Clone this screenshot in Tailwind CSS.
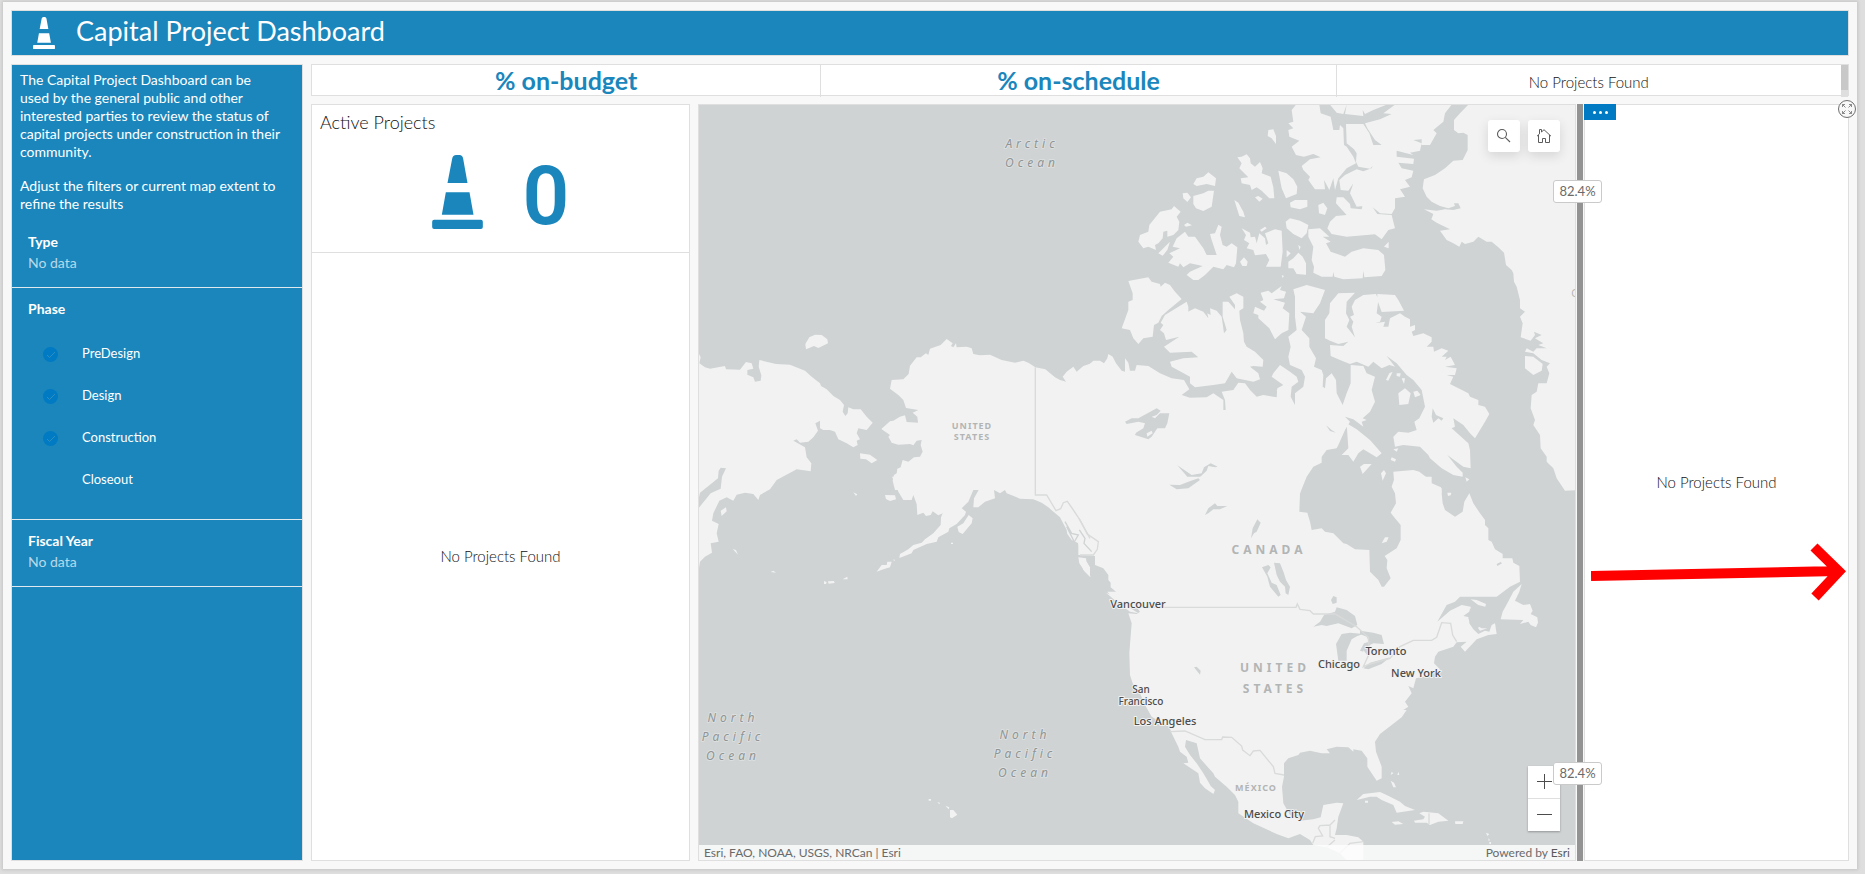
<!DOCTYPE html>
<html lang="en">
<head>
<meta charset="utf-8">
<title>Capital Project Dashboard</title>
<script src="https://cdn.jsdelivr.net/npm/@tailwindcss/browser@4"></script>
</head>
<body class="bg-[#dedede] font-['Lato',sans-serif] text-[#111]">
<svg class="hidden" aria-hidden="true">
  <symbol id="cone" viewBox="0 0 152 222"><path d="M60 11Q62 0 72 0H82Q91 0 93 11L106 84H46ZM41 112H112L124 179H29ZM6 194H146Q152 194 152 200V216Q152 222 146 222H6Q0 222 0 216V200Q0 194 6 194Z" fill="currentColor"/></symbol>
</svg>
<div class="flex h-screen pt-[2px] pr-2 pb-[5px] pl-[3px]">
<div class="flex min-w-0 flex-1 flex-col gap-2 bg-[#f8f8f8] p-2 shadow-[0_0_3px_1px_#c4c4c4]">
  <header class="flex h-[46px] shrink-0 items-center gap-[21px] border border-[#dfdfdf] bg-[#1a86bc] pl-[21px] text-white">
    <svg class="h-8 w-[22px]" aria-hidden="true"><use href="#cone"/></svg>
    <h1 class="pb-[5px] text-[27px] leading-8">Capital Project Dashboard</h1>
  </header>

  <div class="flex min-h-0 flex-1 gap-2">
    <aside class="w-[292px] shrink-0 border border-[#dfdfdf] bg-[#1a86bc] text-white">
      <div class="flex h-[156px] flex-col gap-4 px-2 pt-[6px] text-[14px] leading-[18px]">
        <p>The Capital Project Dashboard can be<br>used by the general public and other<br>interested parties to review the status of<br>capital projects under construction in their<br>community.</p>
        <p>Adjust the filters or current map extent to<br>refine the results</p>
      </div>
      <section class="h-[67px] border-b border-[#dfe9ee] px-4 pt-[11px]">
        <h2 class="text-[14px] leading-5 font-bold">Type</h2>
        <p class="text-[14px] leading-[22px] text-white/70">No data</p>
      </section>
      <fieldset class="border-b border-[#dfe9ee] px-4 pt-[11px] pb-[18px]">
        <legend class="float-left w-full text-[14px] leading-5 font-bold">Phase</legend>
        <div class="clear-both pt-[14px] pl-[15px] text-[13px]">
          <label class="flex h-[42px] items-center gap-6"><span class="relative flex"><input type="checkbox" checked class="peer size-[15px] appearance-none rounded-full checked:bg-[#007ac2]"><svg class="pointer-events-none absolute inset-0 hidden peer-checked:block" viewBox="0 0 15 15" fill="none" stroke="#2b8fc4"><path d="M4 8l2.500 2.500L12 5"/></svg></span>PreDesign</label>
          <label class="flex h-[42px] items-center gap-6"><span class="relative flex"><input type="checkbox" checked class="peer size-[15px] appearance-none rounded-full checked:bg-[#007ac2]"><svg class="pointer-events-none absolute inset-0 hidden peer-checked:block" viewBox="0 0 15 15" fill="none" stroke="#2b8fc4"><path d="M4 8l2.500 2.500L12 5"/></svg></span>Design</label>
          <label class="flex h-[42px] items-center gap-6"><span class="relative flex"><input type="checkbox" checked class="peer size-[15px] appearance-none rounded-full checked:bg-[#007ac2]"><svg class="pointer-events-none absolute inset-0 hidden peer-checked:block" viewBox="0 0 15 15" fill="none" stroke="#2b8fc4"><path d="M4 8l2.500 2.500L12 5"/></svg></span>Construction</label>
          <label class="flex h-[42px] items-center gap-6"><span class="relative flex"><input type="checkbox" class="peer size-[15px] appearance-none rounded-full checked:bg-[#007ac2]"><svg class="pointer-events-none absolute inset-0 hidden peer-checked:block" viewBox="0 0 15 15" fill="none" stroke="#2b8fc4"><path d="M4 8l2.500 2.500L12 5"/></svg></span>Closeout</label>
        </div>
      </fieldset>
      <section class="h-[67px] border-b border-[#dfe9ee] px-4 pt-[11px]">
        <h2 class="text-[14px] leading-5 font-bold">Fiscal Year</h2>
        <p class="text-[14px] leading-[22px] text-white/70">No data</p>
      </section>
    </aside>

    <main class="flex min-w-0 flex-1 flex-col gap-2">
      <div class="grid h-8 shrink-0 grid-cols-[510fr_516fr_512fr] border border-[#dfdfdf] bg-white text-center">
        <div class="border-r border-[#dfdfdf] text-[25px] leading-[30px] font-bold text-[#1a86bc]">% on-budget</div>
        <div class="border-r border-[#dfdfdf] text-[25px] leading-[30px] font-bold text-[#1a86bc]">% on-schedule</div>
        <div class="flex"><p class="flex-1 pt-[2px] text-[15px] leading-[30px] font-light">No Projects Found</p><div class="w-[7px] bg-[#dedede]"><div class="h-[25px] bg-[#c8c8c8]"></div></div></div>
      </div>

      <div class="grid min-h-0 flex-1 grid-cols-[379fr_878fr_265fr] gap-2">
        <section class="flex min-w-0 flex-col border border-[#dfdfdf] bg-white">
          <div class="flex h-[148px] shrink-0 flex-col border-b border-[#dfdfdf]">
            <h2 class="px-2 pt-[7px] text-[18px] leading-5 font-light">Active Projects</h2>
            <div class="flex flex-1 items-center justify-center gap-10 text-[#1a86bc]">
              <svg class="h-[74px] w-[51px]" aria-hidden="true"><use href="#cone"/></svg>
              <span class="pt-2 font-['Roboto',sans-serif] text-[82px] leading-[82px] font-semibold">0</span>
            </div>
          </div>
          <p class="flex flex-1 items-center justify-center text-[15px] font-light">No Projects Found</p>
        </section>

        <section class="relative min-w-0 border border-[#dfdfdf] bg-[#cfd3d4]">
          <div class="absolute inset-0 overflow-hidden">
          <svg class="size-full" viewBox="699 105 876 755" preserveAspectRatio="xMidYMid slice" role="img" aria-label="Map of North America">
            <g fill="#f2f2f2" stroke="none">
              <!-- Siberia, Alaska north -->
              <g transform="translate(690 100) scale(.33333)">
                <path d="M20 760L26 760 32 772 28 790 45 802 60 806 105 798 108 808 150 809 168 786 185 790 190 806 172 810 172 824 190 832 195 845 212 842 214 826 206 800 208 780 258 792 300 794 345 812 365 830 390 850 393 858 410 868 430 888 450 900 462 915 458 935 466 948 473 940 475 922 490 928 512 928 530 950 548 968 530 990 505 985 500 1000 510 1018 500 1022 503 1035 490 1042 470 1030 445 1018 435 995 420 990 400 990 390 985 390 962 376 970 384 992 370 1012 355 1025 330 1028 320 1018 310 1022 345 1042 350 1072 364 1090 362 1114 320 1108 260 1140 240 1168 210 1185 205 1200 190 1182 165 1178 140 1184 130 1202 110 1192 88 1202 70 1240 66 1262 86 1272 80 1300 86 1325 62 1330 66 1358 45 1370 30 1385 26 1410 20 1410Z"/>
                <path d="M108 1105L92 1103 86 1112 84 1135 30 1178 20 1225 28 1222 62 1180 92 1166 96 1130Z" fill="#cfd3d4"/>
                <path d="M348 748L346 732 358 712 375 704 395 705 412 718 414 730 385 744 372 738Z"/>
                <path d="M510 1060L540 1064 562 1080 545 1090 528 1078 511 1076ZM490 1177L502 1183 498 1188ZM92 1232L108 1222 110 1234 95 1248ZM128 1347L138 1350 144 1364Z"/>
                <path d="M1205 790L1180 798 1160 815 1150 800 1130 815 1118 830 1128 845 1110 840 1095 832 1066 808 1036 802 1015 788 1000 782 975 788 935 780 900 764 870 766 850 762 845 745 830 740 800 742 798 730 790 742 783 738 788 730 770 717 752 735 720 746 715 765 708 760 692 772 680 772 660 797 656 822 640 838 605 840 600 866 625 885 640 900 648 924 685 930 668 938 682 950 684 968 650 966 645 946 630 950 610 962 600 964 574 987 600 1005 595 1010 605 1028 625 1034 660 1032 670 1036 680 1022 695 1020 692 1035 698 1055 690 1070 672 1072 655 1085 638 1080 632 1102 622 1106 620 1120 612 1125 608 1142 615 1170 1205 1170Z"/>
              </g>
              <!-- Alaska south and panhandle -->
              <g transform="translate(690 480) scale(.33333)">
                <path d="M606 -10L620 20 625 35 640 60 665 60 670 45 680 72 682 105 700 98 708 108 722 105 728 94 745 106 758 100 753 112 752 135 730 160 705 178 695 188 670 195 655 208 630 222 628 234 665 220 670 210 710 192 740 185 745 172 775 155 778 145 800 132 825 105 828 95 815 85 835 65 850 30 870 15 885 18 882 25 866 30 852 55 850 82 865 82 885 65 915 55 912 30 930 40 945 30 950 40 990 56 1030 58 1055 68 1075 82 1110 112 1130 150 1132 162 1145 180 1165 190 1172 222 1205 225 1205 -10Z"/>
                <path d="M585 45L615 46 618 58 600 63 588 57ZM802 140L820 130 836 105 848 115 845 130 818 162 806 156ZM560 275L575 255 590 255 592 245 605 245 600 262 580 268ZM610 238L615 240 612 244ZM458 298L472 290 473 298ZM402 303L410 306 408 312 402 312ZM414 304L432 303 434 309 416 311ZM242 276L250 272 258 278ZM783 188H789V192H783ZM1170 240L1190 245 1200 262 1200 290 1180 270ZM780 990L790 990 802 1004 786 1015 780 1012ZM766 977L778 982 776 988ZM742 967L750 968 748 973ZM716 957H723V962H716Z"/>
              </g>
              <!-- Arctic Canada -->
              <g transform="translate(1080 100) scale(.33333)">
                <path d="M-5 815L20 800 40 782 60 782 72 790 82 775 85 762 98 770 108 790 125 812 135 815 135 775 145 788 150 812 165 812 170 795 205 798 240 820 275 835 312 840 328 868 305 885 330 893 380 892 400 880 430 900 430 930 437 930 435 900 425 875 460 870 475 848 495 850 510 870 530 890 550 885 590 892 592 865 610 855 575 830 580 820 600 795 630 815 650 830 655 845 635 860 632 890 645 915 645 880 670 860 675 830 665 810 630 795 625 770 632 740 625 710 650 690 645 650 645 590 640 568 680 555 735 570 720 610 700 640 660 635 678 650 665 690 688 715 688 740 708 775 702 800 725 810 730 825 728 860 735 865 738 835 755 820 768 840 770 880 788 915 800 880 812 850 812 795 850 798 860 820 885 830 875 870 885 905 870 935 848 955 860 960 845 965 850 980 820 958 795 950 810 965 795 990 775 1035 770 1045 740 1050 725 1070 725 1088 700 1100 680 1130 660 1180 -5 1180ZM945 1180L940 1115 1000 1110 1018 1115 1050 1140 1052 1155 1085 1165 1085 1180Z"/>
                <path d="M648 14L635 30 640 65 625 70 640 85 625 90 628 110 658 122 635 140 648 165 672 170 700 162 722 172 690 178 665 198 670 210 690 230 685 240 705 268 735 268 732 240 748 270 760 235 765 270 775 235 800 205 828 190 820 170 800 140 792 135 790 85 780 75 778 90 760 90 752 50 722 40 718 14Z"/>
                <path d="M750 14L770 38 790 42 800 14 795 42 850 48 848 30 855 42 880 30 920 14ZM798 72L850 72 868 100 880 135 905 135 885 120 862 85 855 70 900 58 935 42 910 40 945 14 1115 14 1095 40 1090 65 1060 90 1070 100 1050 135 1025 135 1025 118 1000 120 1025 130 1020 152 990 158 1000 165 950 152 950 170 1002 176 1000 192 955 188 965 205 1000 212 995 232 975 240 990 260 960 268 975 290 945 295 945 325 935 342 900 340 878 322 892 342 935 345 945 385 925 390 905 418 885 403 800 410 755 402 742 385 750 365 768 348 800 345 768 310 770 292 790 292 810 312 812 325 845 328 858 278 848 318 830 320 810 280 820 250 805 272 782 270 778 240 795 225 830 208 850 214 875 205 878 198 870 206 835 200 828 185 830 160 822 148 800 130Z"/>
                <path d="M685 388L720 385 748 410 728 410 752 425 738 430 752 455 795 470 815 455 850 445 895 450 912 465 916 510 905 528 853 532 850 512 848 535 790 538 763 530 760 515 758 530 725 530 700 518 702 500 695 480 700 440 685 410ZM617 365L630 355 660 362 685 375 680 400 665 415 640 402 620 385ZM630 308L645 300 682 300 682 320 660 328 632 322ZM715 315L730 308 742 325 735 345 717 340ZM565 90L580 88 588 108 588 132 575 115 563 108ZM472 172L485 170 500 163 510 175 512 190 525 200 540 186 548 205 545 220 572 230 580 262 583 295 568 295 545 272 530 262 515 270 510 255 485 250 482 235 505 232 478 205 485 190ZM595 212L620 220 640 238 652 260 650 282 618 295 605 265ZM525 292L535 288 548 296 538 305ZM340 252L350 235 370 230 385 217 408 235 405 258 380 252 350 258ZM308 280L322 278 333 292 322 306 310 295ZM340 288L370 280 385 272 402 272 395 320 370 333 348 325 340 312ZM463 300L475 308 490 335 495 352 478 348ZM312 375L322 368 336 376 318 380Z"/>
                <path d="M175 425L180 405 205 395 208 375 240 335 275 328 282 318 302 335 290 350 298 365 295 390 280 405 262 410 262 392 250 395 248 415 235 430 225 435 228 450 205 440 190 445ZM235 460L270 425 262 450 248 467ZM265 488L280 470 268 460 300 445 278 440 290 415 315 395 325 410 345 410 370 445 380 465 410 465 395 420 390 402 405 400 415 374 425 380 420 405 428 435 440 440 455 430 472 442 468 490 462 502 440 495 430 508 400 500 375 525 355 540 340 540 320 525 330 515 368 498 330 490 310 502 300 490 295 500ZM485 385L510 398 512 412 525 410 530 430 538 400 555 415 558 435 565 430 555 400 585 388 605 392 608 455 602 500 558 500 568 480 558 462 525 466 520 450 500 445 508 430 492 420 498 405ZM540 390L555 380 560 385 545 395ZM480 485L492 472 503 485 500 498 487 498ZM625 485L640 475 655 458 668 470 678 490 678 524 650 522 640 505 625 505ZM655 435L662 440 658 450ZM912 440L926 425 926 445Z"/>
                <path d="M145 543L205 532 215 545 240 552 242 560 255 548 270 555 285 575 305 597 265 630 245 648 235 668 222 675 218 710 190 715 175 732 160 715 150 690 125 685 145 630 145 605 158 600 158 580ZM240 690L250 675 242 668 255 645 320 605 325 620 325 635 330 632 345 625 370 635 385 655 382 640 392 645 390 625 410 632 425 650 432 700 440 690 428 650 428 605 445 605 465 628 465 615 448 590 470 580 490 590 490 625 478 632 480 660 490 700 492 725 500 740 525 755 550 780 548 800 520 798 510 800 535 820 540 838 520 845 470 835 455 815 435 850 400 855 345 862 330 850 330 830 275 800 270 785 310 775 355 772 335 755 270 758 252 740 298 710 258 720 252 700Z"/>
                <path d="M540 605L550 600 542 578 565 572 575 580 605 558 600 570 618 575 612 595 580 598 615 608 608 625 628 640 625 690 605 700 585 718 568 685 535 655 535 645 520 640 525 620 552 632 560 620ZM735 715L735 660 748 640 750 610 775 580 825 578 800 605 798 640 808 660 800 680 825 712 815 680 820 665 810 650 822 645 815 620 825 600 850 585 888 582 895 600 890 640 905 650 900 665 885 670 915 665 910 680 925 680 930 655 960 640 975 650 990 658 990 680 1005 675 1005 690 995 695 1000 708 1030 700 1055 712 1055 725 1040 740 1060 740 1062 755 1085 745 1105 752 1085 770 1100 770 1095 780 1112 770 1125 795 1095 800 1130 805 1125 825 1100 825 1120 830 1110 852 1165 880 1170 890 1195 900 1195 915 1215 920 1228 942 1215 965 1185 1015 1170 1000 1150 975 1120 955 1125 980 1115 985 1165 1030 1170 1050 1172 1105 1150 1100 1102 1065 1130 1100 1148 1118 1148 1130 1120 1125 1085 1105 1050 1075 1045 1065 1020 1040 970 1035 945 1040 940 1010 955 995 985 998 1010 990 1003 965 1018 955 1035 920 1025 870 1000 840 980 825 950 790 920 768 945 800 928 795 905 805 880 785 865 800 830 785 810 792 780 780 752 768 750 735 790 738 805 725 775 732 750 722ZM892 582L945 585 955 600 972 632 905 636 892 600ZM800 970L830 988 870 1020 905 1060 890 1072 850 1048 835 1060 820 1085 805 1065 785 1065 805 1045ZM955 880L975 865 992 880 985 912 958 915ZM840 1100L852 1092 875 1092 848 1122ZM903 1120L912 1110 918 1120 908 1142ZM935 1072L948 1078 945 1085 932 1080ZM918 840L928 820 938 815 925 842ZM950 820L962 820 960 830 950 828ZM965 835L975 835 972 852ZM1000 875L1012 872 1022 885 1005 892ZM605 525L612 528 608 534ZM620 450L632 460 620 472ZM1156 1132L1168 1138 1160 1145ZM940 1048L955 1045 950 1055ZM590 870L605 865 612 880 600 895Z"/>
                <path d="M135 965L155 955 175 955 230 925 242 932 230 945 215 950 225 955 240 940 268 940 262 970 255 985 232 985 215 1010 205 1018 165 1005 168 998 190 985 195 970 175 965 140 972ZM215 992L200 1000 202 1010 218 1000ZM292 1096L335 1125 365 1120 372 1102 392 1090 413 1100 405 1102 385 1098 380 1112 345 1145 325 1165 290 1168 268 1155 300 1155 325 1142 320 1128ZM738 976L755 990 768 998 750 993ZM1058 925L1068 945 1090 955 1085 962 1075 955 1060 968 1055 950Z" fill="#cfd3d4"/>
              </g>
              <!-- Greenland -->
              <g transform="translate(1320 100) scale(.33333)">
                <path d="M445 14L420 40 402 60 402 90 415 100 430 98 443 105 443 150 428 180 400 182 375 205 345 225 312 238 308 265 320 290 335 305 360 318 385 325 405 318 402 310 415 310 422 325 400 330 375 328 350 332 312 328 340 342 334 358 350 368 390 388 360 392 380 420 400 430 418 440 425 425 435 432 460 425 475 410 500 425 515 425 535 442 552 458 558 495 575 510 580 520 582 545 590 560 600 600 600 625 615 635 600 650 608 670 602 712 632 722 645 705 642 695 665 705 645 715 670 730 655 735 680 745 650 745 640 755 620 745 615 755 640 760 665 780 690 790 680 800 688 820 680 850 655 850 650 875 635 885 632 925 645 960 640 975 660 1005 662 1045 680 1070 680 1085 700 1105 710 1135 735 1172 775 1170 775 14ZM615 768L640 770 668 792 665 812 640 825 615 805Z"/>
              </g>
              <!-- Southern Canada, United States, Mexico -->
              <g transform="translate(1080 480) scale(.33333)">
                <path d="M-5 -10L675 -10 660 40 658 95 682 98 690 125 695 150 725 145 735 155 760 160 790 190 800 192 825 208 868 210 870 275 895 300 905 320 912 320 932 295 920 265 922 240 914 228 950 205 962 180 962 135 945 115 932 98 948 70 945 40 935 20 945 -10 1055 -10 1055 10 1083 22 1088 70 1095 90 1125 110 1148 95 1153 65 1168 40 1180 70 1200 100 1215 120 1215 135 1225 145 1225 180 1235 185 1245 208 1268 222 1268 235 1297 235 1300 248 1318 258 1320 305 1290 320 1250 350 1140 350 1125 365 1100 375 1072 425 1110 392 1145 375 1172 380 1172 392 1150 408 1168 412 1168 430 1180 448 1195 462 1215 452 1228 455 1235 435 1245 430 1250 462 1225 465 1190 478 1155 515 1142 500 1160 485 1130 487 1120 500 1075 515 1065 530 1062 550 1080 568 1075 575 1040 588 1008 595 1000 625 985 618 995 640 975 665 985 680 970 690 980 690 965 712 935 735 900 762 885 785 888 815 905 860 905 895 890 902 862 860 862 835 845 812 820 808 820 815 805 802 770 800 740 808 750 820 725 820 690 812 660 818 655 825 625 835 612 850 612 890 606 920 610 970 630 1005 660 1022 700 1018 722 1012 730 975 770 968 790 970 775 1010 770 1045 765 1065 800 1065 835 1072 850 1085 850 1140 800 1140 780 1120 740 1102 700 1095 690 1080 660 1062 625 1075 590 1062 520 1030 475 1000 475 965 465 945 440 920 405 890 400 880 360 835 350 790 318 780 315 800 330 825 350 850 370 880 385 905 392 918 405 930 400 942 375 925 360 908 355 880 310 850 325 848 320 830 300 815 295 800 275 760 268 740 245 728 215 710 195 675 180 640 158 610 150 585 148 520 155 430 145 400 170 402 180 395 172 385 140 380 120 372 95 350 82 335 108 335 92 322 92 308 85 300 85 285 70 265 45 255 45 228 -5 225Z"/>
                <path d="M1325 312L1318 335 1305 362 1330 375 1350 372 1358 392 1352 402 1372 412 1374 428 1368 442 1352 435 1345 425 1320 432 1330 420 1262 418 1268 395 1282 370 1300 335ZM1172 358L1190 360 1218 372 1216 380 1195 375ZM1188 435L1205 445 1222 445 1200 452ZM78 338L110 352 145 380 175 400 150 395 110 365ZM-5 232L18 235 22 265 32 292 15 275 -2 250ZM830 960L850 942 900 936 920 945 960 965 975 978 1005 990 950 998 940 975 905 960 890 950 870 950ZM855 962H864V968H855ZM1002 1022L1030 1018 1035 1010 1018 1000 1030 995 1075 1000 1105 1022 1075 1025 1050 1035 1040 1028 1005 1028ZM1125 1024L1150 1024 1148 1032 1126 1032ZM935 1026L955 1024 970 1032 945 1034ZM935 875L940 880 932 885ZM955 875L958 885 952 885ZM932 902L942 908 948 922 940 922ZM1218 1058L1228 1062 1222 1068ZM1225 1075L1230 1080 1226 1084ZM1228 1086H1233V1092H1228ZM905 190L915 172 926 172 920 185Z"/>
                <g fill="#cfd3d4">
                  <path d="M268 14L300 15 325 5 355 -5 360 0 325 25 290 28ZM375 105L385 85 405 70 412 78 442 78 420 88 400 88 385 100ZM513 175L518 145 532 118 542 128 530 155 522 160ZM582 248L600 250 612 280 618 300 630 320 625 345 617 340 615 320 600 305 590 285ZM546 262L565 255 572 262 562 280 575 308 590 315 602 345 595 350 570 320 562 290ZM753 360L760 348 770 352 770 368 758 372ZM700 440L720 425 732 405 765 395 770 382 800 390 825 408 832 435 815 445 775 430 740 438 725 435ZM768 492L785 462 810 458 850 462 832 468 815 478 800 512 800 542 775 542ZM840 452L880 458 905 465 912 492 880 490 860 500 865 530 850 510 850 515 840 512 852 490 868 485 860 470 840 462ZM850 565L870 548 930 532 905 552 865 568ZM342 562L350 560 362 572 360 584ZM1250 252L1262 246 1266 250 1252 258ZM1170 385L1190 405 1200 440 1190 445 1172 435 1165 415ZM875 268L895 270 892 280 880 280Z"/>
                  <path d="M1102 38L1114 38 1112 46 1104 48Z" fill="#f2f2f2"/>
                </g>
              </g>
            </g>
            <!-- Country borders -->
            <g fill="none" stroke="#d9dada" stroke-width="4">
              <path transform="translate(690 480) scale(.33333)" d="M1036 -338V45H1070L1098 92 1112 86 1120 68 1132 64 1150 90 1170 120 1200 175"/>
              <path transform="translate(1080 480) scale(.33333)" d="M-3 115L22 162 55 185 52 208 40 225 0 225M180 382H648L652 372 660 388 690 392 700 402 765 402 830 440 865 472 868 520 850 560 870 552 930 535 960 500 1000 481 1055 481 1070 472 1085 428 1112 430 1118 465 1130 485M270 755L315 753 375 779 425 779 428 771 455 772 485 798 488 810 510 827 520 813 540 811 580 860 585 880 612 885M765 1020L750 1035 720 1037 715 1045 728 1068 706 1070 698 1090M750 1035V1070L765 1075M740 1102L765 1080M780 1120L810 1090 850 1085M1047 1000V1032"/>
              <path transform="translate(1080 480) scale(.33333)" stroke="#cfd3d4" d="M-2 150L15 175 12 190 35 215M-40 140L-20 180-15 220M-45 125L-25 160-5 165-20 190"/>
            </g>
            <!-- Place labels -->
            <g text-anchor="middle" class="font-['Noto_Sans',sans-serif]" paint-order="stroke" stroke-linejoin="round">
              <g class="text-[12px] tracking-[4px] italic" fill="#8f9596" stroke="#dcdfdf" stroke-width="2">
                <text x="1032" y="148">Arctic</text><text x="1032" y="167">Ocean</text>
                <text x="733" y="722">North</text><text x="733" y="741">Pacific</text><text x="733" y="760">Ocean</text>
                <text x="1025" y="739">North</text><text x="1025" y="758">Pacific</text><text x="1025" y="777">Ocean</text>
              </g>
              <g class="font-bold" fill="#b2b5b5">
                <g class="text-[9px] tracking-[1px]"><text x="972" y="429">UNITED</text><text x="972" y="440">STATES</text><text x="1256" y="791">MÉXICO</text></g>
                <g class="text-[12px] tracking-[4px]"><text x="1269" y="554">CANADA</text><text x="1275" y="672">UNITED</text><text x="1275" y="693">STATES</text></g>
              </g>
              <g class="text-[11px] font-medium" fill="#4c4c4c" stroke="#f2f2f2" stroke-width="2">
                <text x="1138" y="608">Vancouver</text><text x="1386" y="655">Toronto</text><text x="1339" y="668">Chicago</text><text x="1416" y="677">New York</text>
                <text x="1141" y="693" class="text-[10px]">San</text><text x="1141" y="705" class="text-[10px]">Francisco</text><text x="1165" y="725">Los Angeles</text><text x="1274" y="818">Mexico City</text>
              </g>
              <text x="1575" y="297" class="text-[10px]" fill="#b2b5b5">G</text>
            </g>
          </svg>
          <div class="absolute inset-x-0 bottom-0 flex h-[15px] items-center justify-between bg-white/80 px-[5px] text-[12px] leading-[15px] text-[#6a6a6a]">
            <span>Esri, FAO, NOAA, USGS, NRCan | Esri</span><span>Powered by <a href="#" class="text-[#595959]">Esri</a></span>
          </div>
          </div>
          <div class="absolute top-[15px] right-[15px] flex gap-2">
            <button aria-label="Search" class="flex size-8 items-center justify-center rounded-[3px] bg-white shadow-[0_4px_12px_rgba(0,0,0,0.12)]"><svg class="size-4" viewBox="0 0 16 16" fill="none" stroke="#5c5c5c" stroke-width="1.100"><circle cx="6" cy="6" r="4.500"/><path d="M9.300 9.300L14 14"/></svg></button>
            <button aria-label="Default extent" class="flex size-8 items-center justify-center rounded-[3px] bg-white shadow-[0_4px_12px_rgba(0,0,0,0.12)]"><svg class="size-4" viewBox="0 0 16 16" fill="none" stroke="#5c5c5c"><path d="M1 8.200L3.500 5.900V1.500H5.500V4M5.500 4L8 1.700L15 8.200M2.500 7V14.500H6.500V10.500H9.500V14.500H13.500V7"/></svg></button>
          </div>
          <div class="absolute right-[15px] bottom-[29px] flex flex-col bg-white shadow-[0_1px_2px_rgba(0,0,0,0.3)]">
            <button aria-label="Zoom in" class="flex h-[33px] w-8 items-center justify-center border-b border-[#dfdfdf]"><svg class="size-4" viewBox="0 0 16 16" stroke="#4c4c4c"><path d="M1 7.500H16M8.500 0V15"/></svg></button>
            <button aria-label="Zoom out" class="flex size-8 items-center justify-center"><svg class="size-4" viewBox="0 0 16 16" stroke="#4c4c4c"><path d="M1 7.500H16"/></svg></button>
          </div>
        </section>

        <section class="relative flex min-w-0 items-center justify-center border border-[#dfdfdf] bg-white">
          <p class="text-[15px] font-light">No Projects Found</p>
          <!-- Resize handle between the map and this panel -->
          <div class="absolute -top-px -bottom-px -left-2 w-[6px] bg-[#939393]"></div>
          <span class="absolute top-[75px] -left-8 flex h-[23px] w-[49px] items-center justify-center rounded-[3px] border border-[#cacaca] bg-white text-[13px] text-[#6a6a6a]">82.4%</span>
          <span class="absolute bottom-[75px] -left-8 flex h-[23px] w-[49px] items-center justify-center rounded-[3px] border border-[#cacaca] bg-white text-[13px] text-[#6a6a6a]">82.4%</span>
          <button aria-label="Element options" class="absolute -top-px -left-px flex h-4 w-8 items-center justify-center gap-[3px] bg-[#007ac2]"><i class="size-[3px] rounded-full bg-white"></i><i class="size-[3px] rounded-full bg-white"></i><i class="size-[3px] rounded-full bg-white"></i></button>
          <button aria-label="Expand" class="absolute -top-[5px] -right-2 size-[18px]"><svg viewBox="0 0 18 18" fill="none" stroke="#6e6e6e"><circle cx="9" cy="9" r="8.500" fill="#f8f8f8"/><path d="M7.500 7.500L4.500 4.500M4.500 7V4.500H7M10.500 7.500L13.500 4.500M11 4.500H13.500V7M7.500 10.500L4.500 13.500M4.500 11V13.500H7M10.500 10.500L13.500 13.500M11 13.500H13.500V11" stroke-width=".8"/></svg></button>
          <svg class="absolute top-[438px] right-px h-[58px] w-[256px]" viewBox="0 0 256 58" fill="none" stroke="red" stroke-width="10" aria-hidden="true"><path d="M0 33L248 28M223 4L248 28.500L224 54"/></svg>
        </section>
      </div>
    </main>
  </div>
</div>
</div>
</body>
</html>
